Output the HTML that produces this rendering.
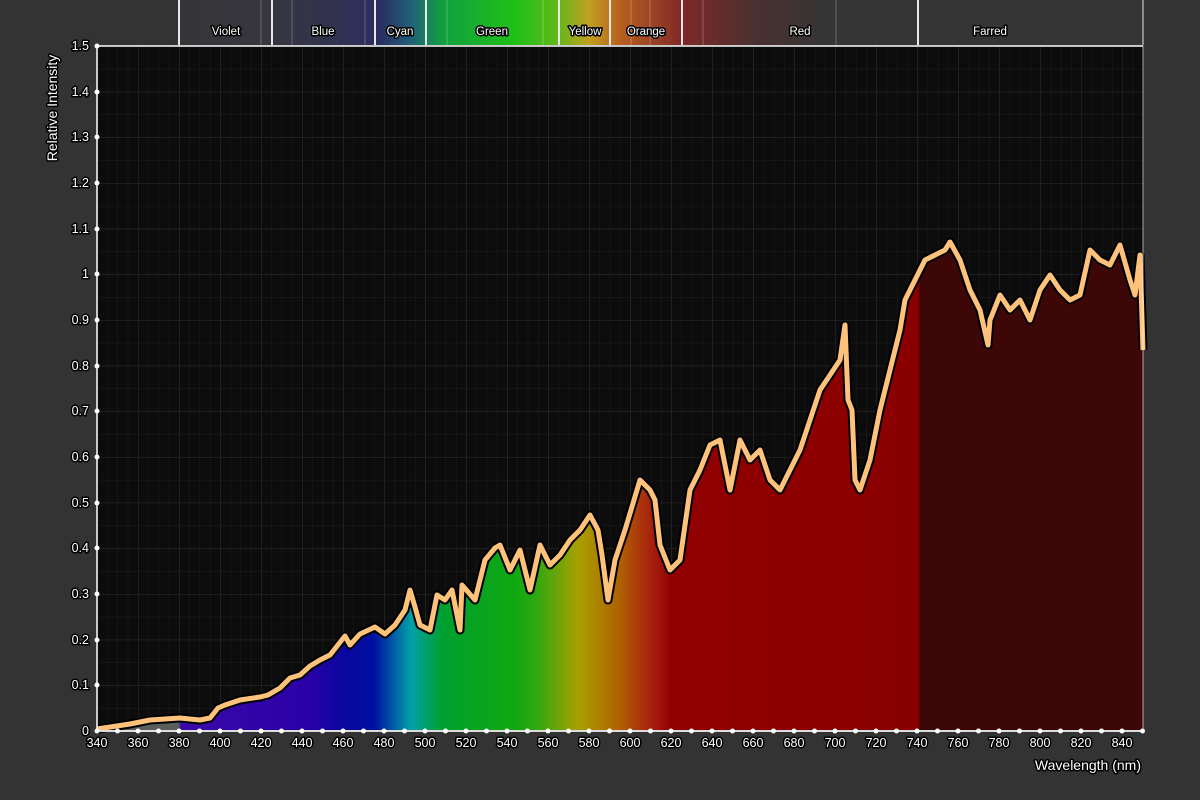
<!DOCTYPE html>
<html><head><meta charset="utf-8"><style>
html,body{margin:0;padding:0;background:#333;}
svg{display:block}
text{font-family:"Liberation Sans",sans-serif;fill:#fff;stroke:#000;stroke-width:3px;paint-order:stroke;stroke-linejoin:round}
</style></head><body>
<svg width="1200" height="800" viewBox="0 0 1200 800" xmlns="http://www.w3.org/2000/svg">
<defs>
<linearGradient id="fillg" gradientUnits="userSpaceOnUse" x1="97" y1="0" x2="1143" y2="0">
<stop offset="0" stop-color="#5a5e58"/>
<stop offset="0.078" stop-color="#5a5e58"/>
<stop offset="0.08" stop-color="#3a0aa8"/>
<stop offset="0.2" stop-color="#2a00a8"/>
<stop offset="0.235" stop-color="#0a06a0"/>
<stop offset="0.265" stop-color="#0010a0"/>
<stop offset="0.3" stop-color="#00a0a8"/>
<stop offset="0.33" stop-color="#00a030"/>
<stop offset="0.4" stop-color="#10a810"/>
<stop offset="0.42" stop-color="#30a810"/>
<stop offset="0.46" stop-color="#a8a000"/>
<stop offset="0.5" stop-color="#b06000"/>
<stop offset="0.53" stop-color="#a82010"/>
<stop offset="0.55" stop-color="#900000"/>
<stop offset="0.785" stop-color="#8a0000"/>
<stop offset="0.787" stop-color="#3e0707"/>
<stop offset="1" stop-color="#3e0707"/>
</linearGradient>
<linearGradient id="bandg" gradientUnits="userSpaceOnUse" x1="97" y1="0" x2="1143" y2="0">
<stop offset="0" stop-color="#353535"/>
<stop offset="0.17" stop-color="#36363e"/>
<stop offset="0.25" stop-color="#30305a"/>
<stop offset="0.27" stop-color="#282e60"/>
<stop offset="0.3" stop-color="#206078"/>
<stop offset="0.33" stop-color="#10a040"/>
<stop offset="0.4" stop-color="#20c018"/>
<stop offset="0.44" stop-color="#60b818"/>
<stop offset="0.47" stop-color="#c0a020"/>
<stop offset="0.5" stop-color="#b86020"/>
<stop offset="0.56" stop-color="#802828"/>
<stop offset="0.63" stop-color="#4a3030"/>
<stop offset="0.7" stop-color="#353535"/>
<stop offset="1" stop-color="#353535"/>
</linearGradient>
<pattern id="minor" patternUnits="userSpaceOnUse" x="97" y="46" width="10.255" height="22.833">
<path d="M0 0V22.833M0 0H10.255" stroke="#1c1c1c" stroke-width="1" fill="none"/>
</pattern>
<pattern id="major" patternUnits="userSpaceOnUse" x="97" y="46" width="41.02" height="45.667">
<path d="M0 0V45.667M0 0H41.02" stroke="#2c2c2c" stroke-width="1" fill="none"/>
</pattern>
</defs>
<rect width="1200" height="800" fill="#333"/>
<rect x="178" y="0" width="965" height="45" fill="url(#bandg)"/>
<g stroke="#fff" stroke-opacity="0.25" stroke-width="1">
<line x1="261" y1="0" x2="261" y2="45"/><line x1="292" y1="0" x2="292" y2="45"/><line x1="365" y1="0" x2="365" y2="45"/>
<line x1="447" y1="0" x2="447" y2="45"/><line x1="543" y1="0" x2="543" y2="45"/><line x1="631" y1="0" x2="631" y2="45"/>
<line x1="650" y1="0" x2="650" y2="45"/><line x1="703" y1="0" x2="703" y2="45"/><line x1="836" y1="0" x2="836" y2="45"/>
</g>
<g stroke="#e8e8e8" stroke-width="2">
<line x1="179" y1="0" x2="179" y2="45"/><line x1="272" y1="0" x2="272" y2="45"/><line x1="375" y1="0" x2="375" y2="45"/>
<line x1="426" y1="0" x2="426" y2="45"/><line x1="559" y1="0" x2="559" y2="45"/><line x1="610" y1="0" x2="610" y2="45"/>
<line x1="682" y1="0" x2="682" y2="45"/><line x1="918" y1="0" x2="918" y2="45"/><line x1="1143" y1="0" x2="1143" y2="45" stroke-opacity="0.5"/>
</g>
<g font-size="11.5" text-anchor="middle">
<text x="226" y="35">Violet</text><text x="323" y="35">Blue</text><text x="400" y="35">Cyan</text>
<text x="492" y="35">Green</text><text x="585" y="35">Yellow</text><text x="646" y="35">Orange</text>
<text x="800" y="35">Red</text><text x="990" y="35">Farred</text>
</g>
<rect x="97" y="46" width="1046" height="685" fill="#0c0c0c"/>
<rect x="97" y="46" width="1046" height="685" fill="url(#minor)"/>
<rect x="97" y="46" width="1046" height="685" fill="url(#major)"/>
<path id="c" d="M97,729 L130,724 150,720 180,718 200,720 210,718 218,708 225,705 240,700 260,697 268,695 280,688 290,678 300,675 310,666 320,660 330,655 345,636 350,645 360,634 375,627 385,634 395,625 405,610 410,590 415,607 420,625 430,630 437,595 445,600 452,590 460,630 462,585 475,600 485,560 495,548 500,545 510,570 520,550 530,590 540,545 550,565 560,555 570,540 580,530 590,515 598,530 602,555 608,600 615,560 625,530 640,480 650,490 655,500 660,545 670,570 680,560 690,490 700,470 710,445 720,440 730,490 740,440 750,460 760,450 770,480 780,490 790,470 800,450 810,420 820,390 830,375 840,360 845,325 848,400 852,410 855,480 860,490 870,460 880,410 890,370 900,330 905,300 910,290 915,280 925,260 935,255 945,250 950,242 960,260 970,290 980,310 988,345 990,320 1000,295 1010,310 1020,300 1030,320 1040,290 1050,275 1060,290 1070,300 1080,295 1090,250 1100,260 1110,265 1120,245 1130,280 1135,295 1140,255 1143,350" fill="none"/>
<path d="M97,729 L130,724 150,720 180,718 200,720 210,718 218,708 225,705 240,700 260,697 268,695 280,688 290,678 300,675 310,666 320,660 330,655 345,636 350,645 360,634 375,627 385,634 395,625 405,610 410,590 415,607 420,625 430,630 437,595 445,600 452,590 460,630 462,585 475,600 485,560 495,548 500,545 510,570 520,550 530,590 540,545 550,565 560,555 570,540 580,530 590,515 598,530 602,555 608,600 615,560 625,530 640,480 650,490 655,500 660,545 670,570 680,560 690,490 700,470 710,445 720,440 730,490 740,440 750,460 760,450 770,480 780,490 790,470 800,450 810,420 820,390 830,375 840,360 845,325 848,400 852,410 855,480 860,490 870,460 880,410 890,370 900,330 905,300 910,290 915,280 925,260 935,255 945,250 950,242 960,260 970,290 980,310 988,345 990,320 1000,295 1010,310 1020,300 1030,320 1040,290 1050,275 1060,290 1070,300 1080,295 1090,250 1100,260 1110,265 1120,245 1130,280 1135,295 1140,255 1143,350 L1143,731 L97,731Z" fill="url(#fillg)"/>
<use href="#c" stroke="#000" stroke-width="9" stroke-linejoin="round"/>
<use href="#c" stroke="#ffc27a" stroke-width="5" stroke-linejoin="round"/>
<line x1="97" y1="46" x2="1143" y2="46" stroke="#fff" stroke-width="1.5"/>
<line x1="1143" y1="46" x2="1143" y2="731" stroke="#fff" stroke-opacity="0.6" stroke-width="1"/>
<line x1="97" y1="46" x2="97" y2="731" stroke="#fff" stroke-width="1.5"/>
<line x1="97" y1="731" x2="1143" y2="731" stroke="#ddd" stroke-width="2"/>
<g fill="#fff">
<circle cx="97" cy="46" r="2.5"/><circle cx="97" cy="92" r="2.5"/><circle cx="97" cy="137" r="2.5"/><circle cx="97" cy="183" r="2.5"/><circle cx="97" cy="229" r="2.5"/><circle cx="97" cy="274" r="2.5"/><circle cx="97" cy="320" r="2.5"/><circle cx="97" cy="366" r="2.5"/><circle cx="97" cy="411" r="2.5"/><circle cx="97" cy="457" r="2.5"/><circle cx="97" cy="503" r="2.5"/><circle cx="97" cy="548" r="2.5"/><circle cx="97" cy="594" r="2.5"/><circle cx="97" cy="640" r="2.5"/><circle cx="97" cy="685" r="2.5"/>
</g>
<g font-size="12.5" text-anchor="end">
<text x="89" y="50">1.5</text><text x="89" y="96">1.4</text><text x="89" y="141">1.3</text><text x="89" y="187">1.2</text><text x="89" y="233">1.1</text><text x="89" y="278">1</text><text x="89" y="324">0.9</text><text x="89" y="370">0.8</text><text x="89" y="415">0.7</text><text x="89" y="461">0.6</text><text x="89" y="507">0.5</text><text x="89" y="552">0.4</text><text x="89" y="598">0.3</text><text x="89" y="644">0.2</text><text x="89" y="689">0.1</text><text x="89" y="735">0</text>
</g>
<g font-size="12.5" text-anchor="middle">
<text x="97" y="747">340</text><text x="138" y="747">360</text><text x="179" y="747">380</text><text x="220" y="747">400</text><text x="261" y="747">420</text><text x="302" y="747">440</text><text x="343" y="747">460</text><text x="384" y="747">480</text><text x="425" y="747">500</text><text x="466" y="747">520</text><text x="507" y="747">540</text><text x="548" y="747">560</text><text x="589" y="747">580</text><text x="630" y="747">600</text><text x="671" y="747">620</text><text x="712" y="747">640</text><text x="753" y="747">660</text><text x="794" y="747">680</text><text x="835" y="747">700</text><text x="876" y="747">720</text><text x="917" y="747">740</text><text x="958" y="747">760</text><text x="999" y="747">780</text><text x="1040" y="747">800</text><text x="1081" y="747">820</text><text x="1122" y="747">840</text>
</g>
<text x="1141" y="770" font-size="14" text-anchor="end">Wavelength (nm)</text>
<text transform="translate(57,108) rotate(-90)" font-size="14" text-anchor="middle">Relative Intensity</text>
<g fill="#fff">
<circle cx="97" cy="731" r="2.5"/><circle cx="117.5" cy="731" r="2.5"/><circle cx="138" cy="731" r="2.5"/><circle cx="158.5" cy="731" r="2.5"/><circle cx="179" cy="731" r="2.5"/><circle cx="199.5" cy="731" r="2.5"/><circle cx="220" cy="731" r="2.5"/><circle cx="240.5" cy="731" r="2.5"/><circle cx="261" cy="731" r="2.5"/><circle cx="281.5" cy="731" r="2.5"/><circle cx="302" cy="731" r="2.5"/><circle cx="322.5" cy="731" r="2.5"/><circle cx="343" cy="731" r="2.5"/><circle cx="363.5" cy="731" r="2.5"/><circle cx="384" cy="731" r="2.5"/><circle cx="404.5" cy="731" r="2.5"/><circle cx="425" cy="731" r="2.5"/><circle cx="445.5" cy="731" r="2.5"/><circle cx="466" cy="731" r="2.5"/><circle cx="486.5" cy="731" r="2.5"/><circle cx="507" cy="731" r="2.5"/><circle cx="527.5" cy="731" r="2.5"/><circle cx="548" cy="731" r="2.5"/><circle cx="568.5" cy="731" r="2.5"/><circle cx="589" cy="731" r="2.5"/><circle cx="609.5" cy="731" r="2.5"/><circle cx="630" cy="731" r="2.5"/><circle cx="650.5" cy="731" r="2.5"/><circle cx="671" cy="731" r="2.5"/><circle cx="691.5" cy="731" r="2.5"/><circle cx="712" cy="731" r="2.5"/><circle cx="732.5" cy="731" r="2.5"/><circle cx="753" cy="731" r="2.5"/><circle cx="773.5" cy="731" r="2.5"/><circle cx="794" cy="731" r="2.5"/><circle cx="814.5" cy="731" r="2.5"/><circle cx="835" cy="731" r="2.5"/><circle cx="855.5" cy="731" r="2.5"/><circle cx="876" cy="731" r="2.5"/><circle cx="896.5" cy="731" r="2.5"/><circle cx="917" cy="731" r="2.5"/><circle cx="937.5" cy="731" r="2.5"/><circle cx="958" cy="731" r="2.5"/><circle cx="978.5" cy="731" r="2.5"/><circle cx="999" cy="731" r="2.5"/><circle cx="1019.5" cy="731" r="2.5"/><circle cx="1040" cy="731" r="2.5"/><circle cx="1060.5" cy="731" r="2.5"/><circle cx="1081" cy="731" r="2.5"/><circle cx="1101.5" cy="731" r="2.5"/><circle cx="1122" cy="731" r="2.5"/><circle cx="1142.5" cy="731" r="2.5"/>
</g>
</svg>
</body></html>
